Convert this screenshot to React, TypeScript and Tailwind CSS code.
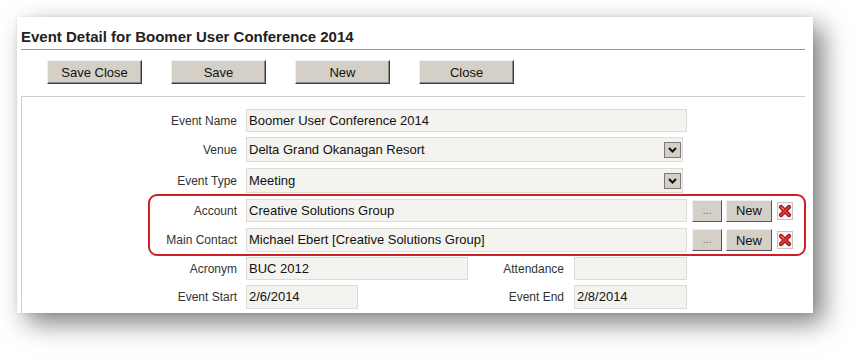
import React from "react";

const FONT = "font-['Liberation_Sans',Arial,sans-serif]";

function ToolButton({ label }: { label: string }) {
  return (
    <button className="h-[24px] w-[95px] border border-t-[#f2f2f2] border-l-[#f2f2f2] border-b-[#3c3c3c] border-r-[#3c3c3c] bg-[#d4d0c8] text-[13px] leading-none text-[#111] shadow-[inset_-1px_-1px_0_#8a8a8a]">
      {label}
    </button>
  );
}

function SmallButton({ label, width, muted }: { label: string; width: string; muted?: boolean }) {
  return (
    <button
      className={`${width} h-[22px] border border-t-[#f0f0f0] border-l-[#f0f0f0] border-b-[#555] border-r-[#555] bg-[#d4d0c8] leading-none ${
        muted ? "text-[10px] text-[#666]" : "text-[13px] text-[#111]"
      }`}
    >
      {label}
    </button>
  );
}

function DeleteIcon() {
  return (
    <svg width="16" height="18" viewBox="0 0 16 18">
      <rect x="0.5" y="0.5" width="15" height="17" fill="#f6f6f6" stroke="#c4c4c4" />
      <path d="M4 5 L12 13 M12 5 L4 13" stroke="#8e1111" strokeWidth="4.2" strokeLinecap="round" />
      <path d="M4 5 L12 13 M12 5 L4 13" stroke="#e23434" strokeWidth="2.4" strokeLinecap="round" />
      <path d="M4.5 5.2 L7 7.6" stroke="#ffb0b0" strokeWidth="0.8" />
    </svg>
  );
}

function Field({ value, width, height }: { value: string; width: string; height: string }) {
  return (
    <div className={`${width} ${height} flex items-center border border-[#dddbd5] bg-[#f4f3ef] px-[2px] text-[13px] text-[#111]`}>
      {value}
    </div>
  );
}

function SelectField({ value }: { value: string }) {
  return (
    <div className="flex h-[25px] w-[437px] items-center justify-between border border-[#dddbd5] bg-[#f4f3ef] pl-[2px] pr-[1px] text-[13px] text-[#111]">
      <span>{value}</span>
      <span className="flex h-[16px] w-[17px] items-center justify-center border border-[#7a7a7a] bg-[#d4d0c8]">
        <svg width="11" height="8" viewBox="0 0 11 8">
          <path d="M2 2 L5.5 5.5 L9 2" fill="none" stroke="#111" strokeWidth="2" />
        </svg>
      </span>
    </div>
  );
}

function Label({ text, width }: { text: string; width: string }) {
  return <div className={`${width} shrink-0 text-right text-[12px] text-[#333]`}>{text}</div>;
}

export default function App() {
  return (
    <div className={`h-[362px] w-[862px] overflow-hidden bg-white pl-[17px] pt-[17px] ${FONT}`}>
      <div className="relative h-[296px] w-[796px] bg-white pl-[4px] pr-[8px] shadow-[0_0_4px_rgba(0,0,0,0.08),10px_10px_24px_rgba(0,0,0,0.5)]">
        <h1 className="border-b border-[#9a9a9a] pb-[3px] pt-[11px] text-[15px] font-bold leading-[18px] text-[#222]">
          Event Detail for Boomer User Conference 2014
        </h1>

        <div className="mt-[10px] flex gap-[29px] pl-[26px]">
          <ToolButton label="Save Close" />
          <ToolButton label="Save" />
          <ToolButton label="New" />
          <ToolButton label="Close" />
        </div>

        <div className="mt-[12px] h-[217px] border-l border-t border-[#cfcfcf]">
          <div className="mt-[12px] flex h-[23px] items-center gap-[9px]">
            <Label text="Event Name" width="w-[215px]" />
            <Field value="Boomer User Conference 2014" width="w-[441px]" height="h-[23px]" />
          </div>

          <div className="mt-[5px] flex h-[25px] items-center gap-[9px]">
            <Label text="Venue" width="w-[215px]" />
            <SelectField value="Delta Grand Okanagan Resort" />
          </div>

          <div className="mt-[6px] flex h-[25px] items-center gap-[9px]">
            <Label text="Event Type" width="w-[215px]" />
            <SelectField value="Meeting" />
          </div>

          <div className="mt-[6px] flex h-[23px] items-center">
            <Label text="Account" width="w-[215px]" />
            <div className="ml-[9px]">
              <Field value="Creative Solutions Group" width="w-[441px]" height="h-[23px]" />
            </div>
            <div className="ml-[5px] flex items-center gap-[4px]">
              <SmallButton label="..." width="w-[30px]" muted />
              <SmallButton label="New" width="w-[46px]" />
            </div>
            <div className="ml-[5px] flex">
              <DeleteIcon />
            </div>
          </div>

          <div className="mt-[6px] flex h-[24px] items-center">
            <Label text="Main Contact" width="w-[215px]" />
            <div className="ml-[9px]">
              <Field value="Michael Ebert [Creative Solutions Group]" width="w-[441px]" height="h-[24px]" />
            </div>
            <div className="ml-[5px] flex items-center gap-[4px]">
              <SmallButton label="..." width="w-[30px]" muted />
              <SmallButton label="New" width="w-[46px]" />
            </div>
            <div className="ml-[5px] flex">
              <DeleteIcon />
            </div>
          </div>

          <div className="mt-[5px] flex h-[23px] items-center">
            <Label text="Acronym" width="w-[215px]" />
            <div className="ml-[9px]">
              <Field value="BUC 2012" width="w-[222px]" height="h-[23px]" />
            </div>
            <Label text="Attendance" width="w-[96px]" />
            <div className="ml-[10px]">
              <Field value="" width="w-[113px]" height="h-[23px]" />
            </div>
          </div>

          <div className="mt-[5px] flex h-[24px] items-center">
            <Label text="Event Start" width="w-[215px]" />
            <div className="ml-[9px]">
              <Field value="2/6/2014" width="w-[112px]" height="h-[24px]" />
            </div>
            <Label text="Event End" width="w-[206px]" />
            <div className="ml-[10px]">
              <Field value="2/8/2014" width="w-[113px]" height="h-[24px]" />
            </div>
          </div>
        </div>

        <div className="pointer-events-none absolute left-[131px] top-[177px] h-[62px] w-[658px] rounded-[9px] border-2 border-[#cf2026]" />
      </div>
    </div>
  );
}
